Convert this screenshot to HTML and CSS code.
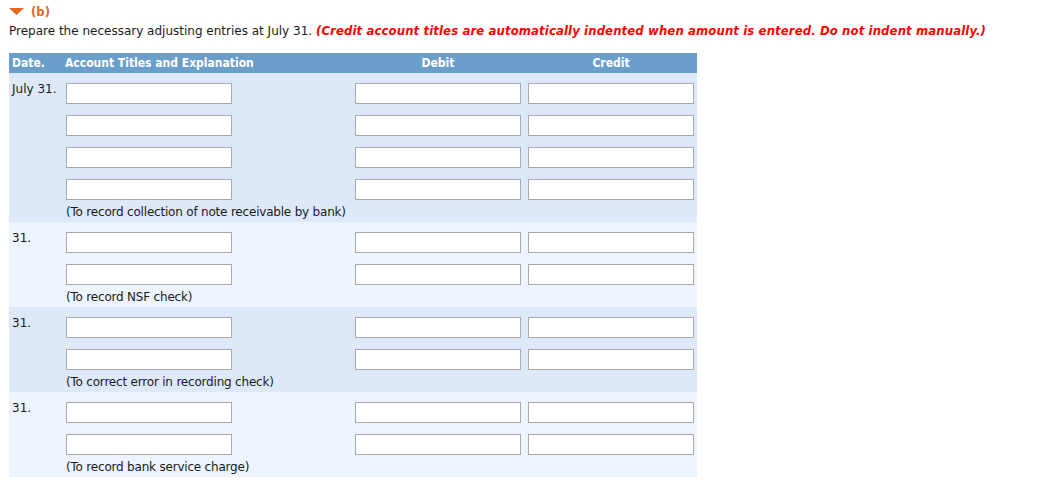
FILE: index.html
```html
<!DOCTYPE html>
<html>
<head>
<meta charset="utf-8">
<link rel="stylesheet" href="styles.css">
</head>
<body>
<div class="part">
  <div class="part-title">
    <svg class="caret" width="15" height="7" viewBox="0 0 15 7"><polygon points="0,0 15,0 7.5,7" fill="#e8661f"/></svg>
    <span class="part-label">(b)</span>
  </div>
  <p class="instr">Prepare the necessary adjusting entries at July 31. <em class="warn">(Credit account titles are automatically indented when amount is entered. Do not indent manually.)</em></p>
  <div class="journal">
    <div class="jhead">
      <div class="h-date">Date.</div>
      <div class="h-acct">Account Titles and Explanation</div>
      <div class="h-amt">Debit</div>
      <div class="h-amt">Credit</div>
    </div>

    <div class="group dark">
      <div class="date">July 31.</div>
      <div class="entries">
        <div class="line"><input class="acct"><input class="amt debit"><input class="amt"></div>
        <div class="line"><input class="acct"><input class="amt debit"><input class="amt"></div>
        <div class="line"><input class="acct"><input class="amt debit"><input class="amt"></div>
        <div class="line"><input class="acct"><input class="amt debit"><input class="amt"></div>
        <div class="note">(To record collection of note receivable by bank)</div>
      </div>
    </div>

    <div class="group light">
      <div class="date">31.</div>
      <div class="entries">
        <div class="line"><input class="acct"><input class="amt debit"><input class="amt"></div>
        <div class="line"><input class="acct"><input class="amt debit"><input class="amt"></div>
        <div class="note">(To record NSF check)</div>
      </div>
    </div>

    <div class="group dark">
      <div class="date">31.</div>
      <div class="entries">
        <div class="line"><input class="acct"><input class="amt debit"><input class="amt"></div>
        <div class="line"><input class="acct"><input class="amt debit"><input class="amt"></div>
        <div class="note">(To correct error in recording check)</div>
      </div>
    </div>

    <div class="group light">
      <div class="date">31.</div>
      <div class="entries">
        <div class="line"><input class="acct"><input class="amt debit"><input class="amt"></div>
        <div class="line"><input class="acct"><input class="amt debit"><input class="amt"></div>
        <div class="note">(To record bank service charge)</div>
      </div>
    </div>
  </div>
</div>
</body>
</html>
```

FILE: styles.css
```css
html, body {
  margin: 0;
  padding: 0;
  background: #ffffff;
}
body {
  font-family: "DejaVu Sans", "Liberation Sans", sans-serif;
  font-size: 12px;
  color: #1a1a1a;
}
.part {
  padding: 0 0 0 9px;
}
.part-title {
  display: flex;
  align-items: center;
  height: 20px;
  padding-top: 1px;
}
.caret {
  display: block;
  margin-right: 7px;
}
.part-label {
  color: #e8661f;
  font-weight: bold;
  font-size: 13px;
  font-family: "DejaVu Sans Condensed", "DejaVu Sans", sans-serif;
}
.instr {
  margin: 0;
  height: 20px;
  line-height: 20px;
  white-space: nowrap;
}
.warn {
  color: #ff0000;
  font-weight: bold;
  font-style: italic;
  font-family: "DejaVu Sans Condensed", "DejaVu Sans", sans-serif;
  font-size: 13px;
  letter-spacing: 0.11px;
}
.journal {
  margin-top: 12px;
  width: 688px;
}
.jhead {
  display: grid;
  grid-template-columns: 57px 289px 173px 169px;
  height: 20px;
  line-height: 20px;
  background: #6a9fcb;
  color: #ffffff;
  font-weight: bold;
  font-size: 12px;
  font-family: "DejaVu Sans Condensed", "DejaVu Sans", sans-serif;
}
.h-date {
  padding-left: 3px;
}
.h-acct {
  margin-left: -1px;
}
.h-amt {
  width: 166px;
  text-align: center;
}
.group {
  display: grid;
  grid-template-columns: 57px 631px;
  padding-top: 10px;
}
.group.dark {
  background: #dde9f8;
}
.group.light {
  background: #edf4fd;
}
.date {
  padding-left: 3px;
  line-height: 16px;
  margin-top: -2px;
}
.line {
  display: flex;
  height: 21px;
  margin-bottom: 11px;
}
.line:nth-last-child(2) {
  margin-bottom: 3px;
}
input {
  box-sizing: border-box;
  height: 21px;
  border: 1px solid #a9a9a9;
  background: #ffffff;
  margin: 0;
  padding: 0 3px;
  font: inherit;
}
.acct {
  width: 166px;
  margin-right: 123px;
}
.amt {
  width: 166px;
}
.debit {
  margin-right: 7px;
}
.note {
  height: 18px;
  line-height: 18px;
  padding-bottom: 1px;
  letter-spacing: -0.2px;
}
```
